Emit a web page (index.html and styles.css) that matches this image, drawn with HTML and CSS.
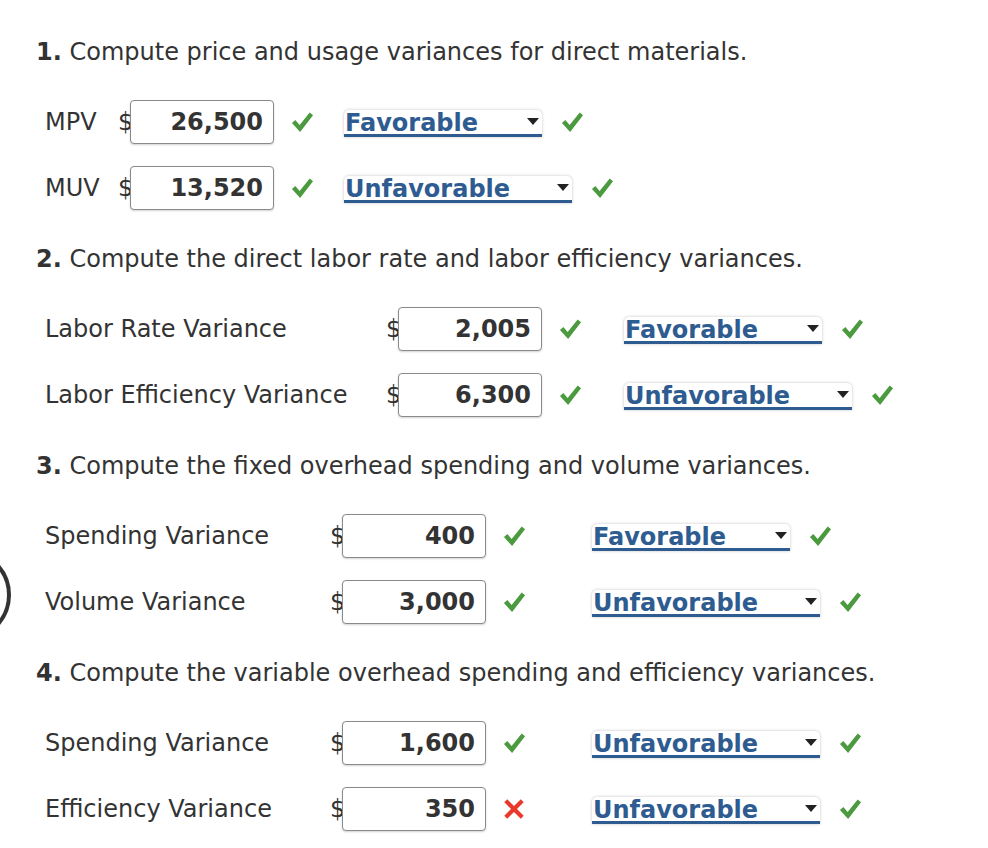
FILE: index.html
```html
<!DOCTYPE html>
<html>
<head>
<meta charset="utf-8">
<link rel="stylesheet" href="styles.css">
</head>
<body>
<div class="ring"></div>
<div class="page">
  <section class="part p1">
    <h2 class="q"><b>1.</b> Compute price and usage variances for direct materials.</h2>
    <div class="row">
      <span class="label">MPV</span><span class="dollar">$</span><span class="input">26,500</span>
      <span class="mark"><svg class="chk" viewBox="0 0 24 24"><path d="M1 12.5 L4.5 9.5 L9 14.5 L19.5 1.5 L23 4.5 L9.5 22 Z"/></svg></span>
      <span class="select w-fav"><span class="opt">Favorable</span><span class="caret"></span></span>
      <svg class="chk after" viewBox="0 0 24 24"><path d="M1 12.5 L4.5 9.5 L9 14.5 L19.5 1.5 L23 4.5 L9.5 22 Z"/></svg>
    </div>
    <div class="row">
      <span class="label">MUV</span><span class="dollar">$</span><span class="input">13,520</span>
      <span class="mark"><svg class="chk" viewBox="0 0 24 24"><path d="M1 12.5 L4.5 9.5 L9 14.5 L19.5 1.5 L23 4.5 L9.5 22 Z"/></svg></span>
      <span class="select w-unf"><span class="opt">Unfavorable</span><span class="caret"></span></span>
      <svg class="chk after" viewBox="0 0 24 24"><path d="M1 12.5 L4.5 9.5 L9 14.5 L19.5 1.5 L23 4.5 L9.5 22 Z"/></svg>
    </div>
  </section>

  <section class="part p2">
    <h2 class="q"><b>2.</b> Compute the direct labor rate and labor efficiency variances.</h2>
    <div class="row">
      <span class="label">Labor Rate Variance</span><span class="dollar">$</span><span class="input">2,005</span>
      <span class="mark"><svg class="chk" viewBox="0 0 24 24"><path d="M1 12.5 L4.5 9.5 L9 14.5 L19.5 1.5 L23 4.5 L9.5 22 Z"/></svg></span>
      <span class="select w-fav"><span class="opt">Favorable</span><span class="caret"></span></span>
      <svg class="chk after" viewBox="0 0 24 24"><path d="M1 12.5 L4.5 9.5 L9 14.5 L19.5 1.5 L23 4.5 L9.5 22 Z"/></svg>
    </div>
    <div class="row">
      <span class="label">Labor Efficiency Variance</span><span class="dollar">$</span><span class="input">6,300</span>
      <span class="mark"><svg class="chk" viewBox="0 0 24 24"><path d="M1 12.5 L4.5 9.5 L9 14.5 L19.5 1.5 L23 4.5 L9.5 22 Z"/></svg></span>
      <span class="select w-unf"><span class="opt">Unfavorable</span><span class="caret"></span></span>
      <svg class="chk after" viewBox="0 0 24 24"><path d="M1 12.5 L4.5 9.5 L9 14.5 L19.5 1.5 L23 4.5 L9.5 22 Z"/></svg>
    </div>
  </section>

  <section class="part p3">
    <h2 class="q"><b>3.</b> Compute the fixed overhead spending and volume variances.</h2>
    <div class="row">
      <span class="label">Spending Variance</span><span class="dollar">$</span><span class="input">400</span>
      <span class="mark"><svg class="chk" viewBox="0 0 24 24"><path d="M1 12.5 L4.5 9.5 L9 14.5 L19.5 1.5 L23 4.5 L9.5 22 Z"/></svg></span>
      <span class="select w-fav"><span class="opt">Favorable</span><span class="caret"></span></span>
      <svg class="chk after" viewBox="0 0 24 24"><path d="M1 12.5 L4.5 9.5 L9 14.5 L19.5 1.5 L23 4.5 L9.5 22 Z"/></svg>
    </div>
    <div class="row">
      <span class="label">Volume Variance</span><span class="dollar">$</span><span class="input">3,000</span>
      <span class="mark"><svg class="chk" viewBox="0 0 24 24"><path d="M1 12.5 L4.5 9.5 L9 14.5 L19.5 1.5 L23 4.5 L9.5 22 Z"/></svg></span>
      <span class="select w-unf"><span class="opt">Unfavorable</span><span class="caret"></span></span>
      <svg class="chk after" viewBox="0 0 24 24"><path d="M1 12.5 L4.5 9.5 L9 14.5 L19.5 1.5 L23 4.5 L9.5 22 Z"/></svg>
    </div>
  </section>

  <section class="part p3">
    <h2 class="q"><b>4.</b> Compute the variable overhead spending and efficiency variances.</h2>
    <div class="row">
      <span class="label">Spending Variance</span><span class="dollar">$</span><span class="input">1,600</span>
      <span class="mark"><svg class="chk" viewBox="0 0 24 24"><path d="M1 12.5 L4.5 9.5 L9 14.5 L19.5 1.5 L23 4.5 L9.5 22 Z"/></svg></span>
      <span class="select w-unf"><span class="opt">Unfavorable</span><span class="caret"></span></span>
      <svg class="chk after" viewBox="0 0 24 24"><path d="M1 12.5 L4.5 9.5 L9 14.5 L19.5 1.5 L23 4.5 L9.5 22 Z"/></svg>
    </div>
    <div class="row">
      <span class="label">Efficiency Variance</span><span class="dollar">$</span><span class="input">350</span>
      <span class="mark"><svg class="cross" viewBox="0 0 24 24"><path d="M3 3 L21 21 M21 3 L3 21"/></svg></span>
      <span class="select w-unf"><span class="opt">Unfavorable</span><span class="caret"></span></span>
      <svg class="chk after" viewBox="0 0 24 24"><path d="M1 12.5 L4.5 9.5 L9 14.5 L19.5 1.5 L23 4.5 L9.5 22 Z"/></svg>
    </div>
  </section>
</div>
</body>
</html>
```

FILE: styles.css
```css
html, body {
  margin: 0;
  padding: 0;
  background: #fff;
}
body {
  font-family: "DejaVu Sans", Verdana, sans-serif;
  color: #333;
  font-size: 24px;
  position: relative;
  width: 988px;
  height: 848px;
  overflow: hidden;
}
.ring {
  position: absolute;
  left: -81px;
  top: 549px;
  width: 92px;
  height: 92px;
  box-sizing: border-box;
  border: 4px solid #333;
  border-radius: 50%;
}
.page {
  padding: 40px 0 0 36px;
}
.part {
  margin-bottom: 37px;
}
.q {
  font-size: 24px;
  font-weight: normal;
  line-height: 24px;
  height: 24px;
  margin: 0 0 36px 0;
  white-space: nowrap;
}
.q b {
  font-weight: bold;
}
.row {
  display: flex;
  align-items: center;
  height: 44px;
  margin-left: 9px;
  margin-bottom: 22px;
}
.row:last-child {
  margin-bottom: 0;
}
.label {
  white-space: nowrap;
}
.p1 .label { width: 73px; }
.p2 .label { width: 341px; }
.p3 .label { width: 285px; }
.dollar {
  width: 12px;
  overflow: visible;
  white-space: nowrap;
}
.input {
  box-sizing: border-box;
  width: 144px;
  height: 44px;
  border: 1.5px solid #8a8a8a;
  border-radius: 4px;
  box-shadow: 0 1px 2px rgba(0,0,0,0.18);
  display: flex;
  align-items: center;
  justify-content: flex-end;
  padding-right: 10px;
  font-weight: bold;
  color: #333;
  background: #fff;
}
.mark {
  display: flex;
  align-items: center;
  padding-left: 17px;
}
.p1 .mark { width: 53px; }
.p2 .mark { width: 65px; }
.p3 .mark { width: 89px; }
.chk {
  width: 23px;
  height: 23px;
  fill: #4c9a3f;
}
.cross {
  width: 22px;
  height: 22px;
  fill: none;
  stroke: #e8392b;
  stroke-width: 4.5;
}
.select {
  position: relative;
  box-sizing: border-box;
  height: 27px;
  border-bottom: 3px solid #2e5c91;
  background: #fff;
  border-radius: 5px 5px 0 0;
  box-shadow: 0 0 3px rgba(0,0,0,0.25);
  display: flex;
  align-items: flex-end;
  margin-top: 3px;
}
.w-fav { width: 198px; }
.w-unf { width: 228px; }
.opt {
  color: #2e5c91;
  font-weight: bold;
  line-height: 22px;
  padding-left: 1px;
  white-space: nowrap;
}
.caret {
  position: absolute;
  right: 3px;
  top: 8px;
  width: 0;
  height: 0;
  border-left: 6px solid transparent;
  border-right: 6px solid transparent;
  border-top: 7px solid #222;
}
.chk.after {
  margin-left: 19px;
}
```
